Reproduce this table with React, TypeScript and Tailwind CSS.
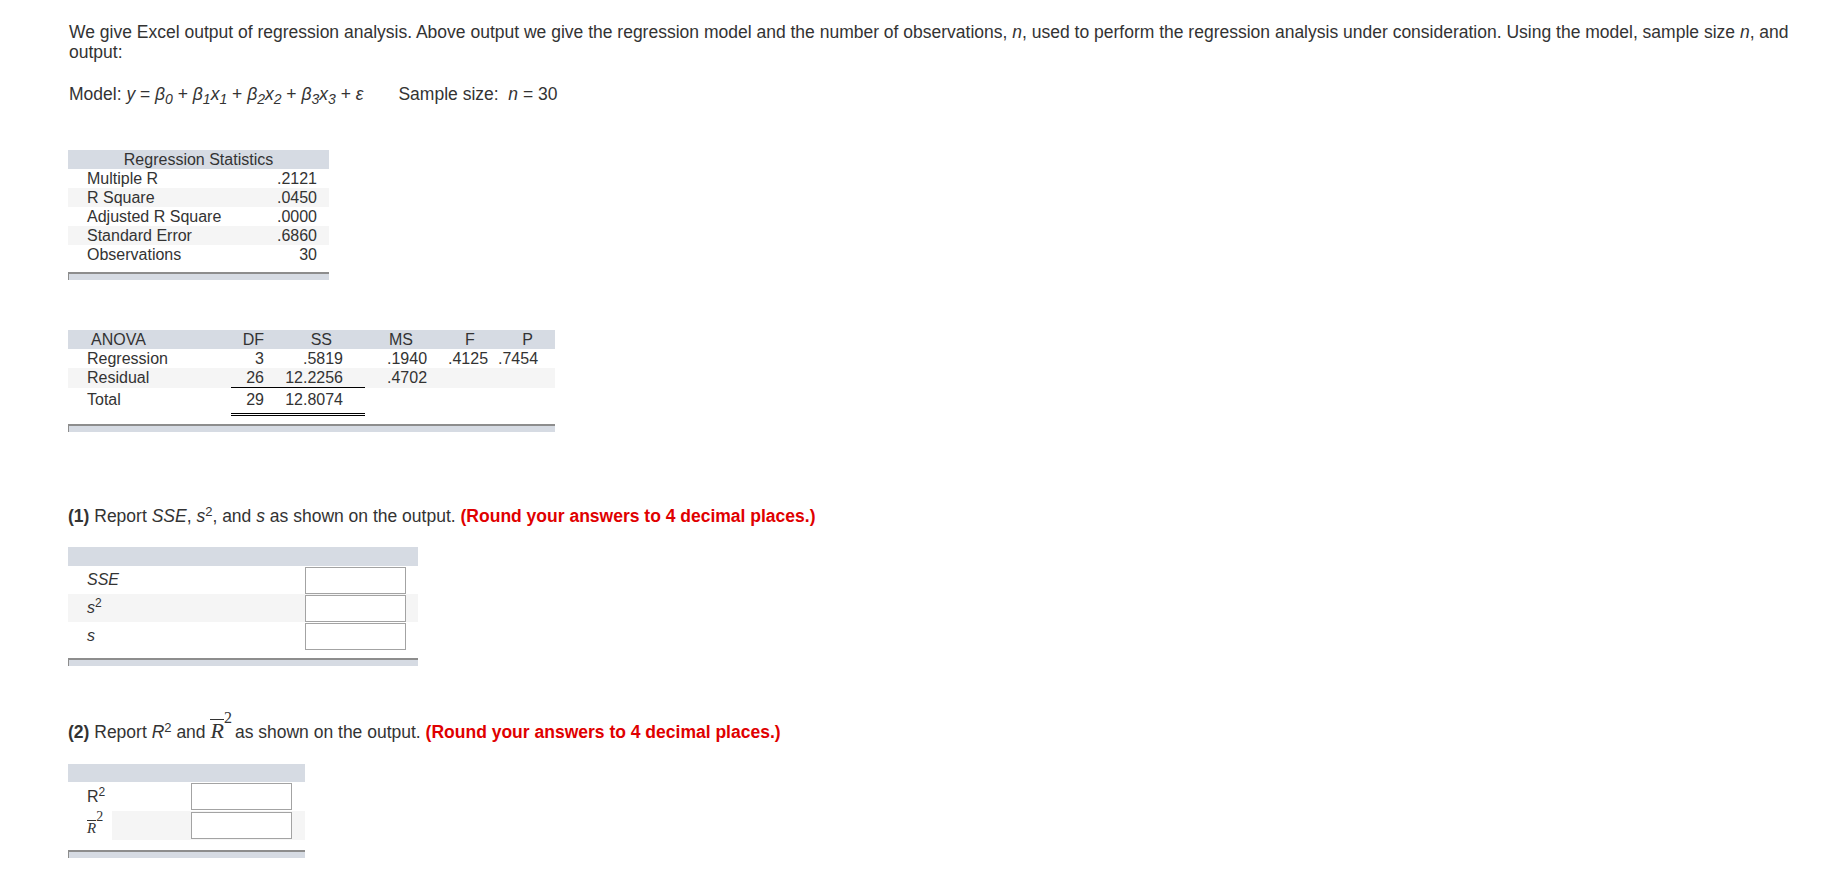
import React from "react";

const font = "font-['Liberation_Sans',Arial,sans-serif]";

function Sub({ children }: { children: React.ReactNode }) {
  return <sub className="relative bottom-[-0.3em] align-baseline text-[14px] italic leading-none">{children}</sub>;
}

function Beta({ n }: { n: string }) {
  return (
    <span className="italic">
      β<Sub>{n}</Sub>
    </span>
  );
}

function X({ n }: { n: string }) {
  return (
    <span className="italic">
      x<Sub>{n}</Sub>
    </span>
  );
}

function BottomBar() {
  return <div className="h-[8px] border-l border-t-2 border-[#8d8d8d] bg-[#d6dbe3]" />;
}

const stats = [
  ["Multiple R", ".2121"],
  ["R Square", ".0450"],
  ["Adjusted R Square", ".0000"],
  ["Standard Error", ".6860"],
  ["Observations", "30"],
];

function RegressionStats() {
  return (
    <div className="w-[261px] text-[16px]">
      <div className="h-[19px] bg-[#d6dbe3] text-center leading-[19px]">Regression Statistics</div>
      {stats.map(([label, value], i) => (
        <div
          key={label}
          className={`flex h-[19px] items-center justify-between pl-[19px] pr-[12px] leading-[19px] ${i % 2 === 1 ? "bg-[#f5f5f5]" : "bg-white"}`}
        >
          <span>{label}</span>
          <span>{value}</span>
        </div>
      ))}
      <div className="mt-[8px]">
        <BottomBar />
      </div>
    </div>
  );
}

function AnovaTable() {
  const cols = "grid grid-cols-[163px_41px_93px_73px_52px_65px]";
  return (
    <div className="w-[487px] text-[16px]">
      <div className={`${cols} h-[19px] bg-[#d6dbe3] leading-[19px]`}>
        <span className="pl-[23px]">ANOVA</span>
        <span className="pr-[8px] text-right">DF</span>
        <span className="pr-[33px] text-right">SS</span>
        <span className="pl-[24px]">MS</span>
        <span className="pl-[27px]">F</span>
        <span className="pr-[22px] text-right">P</span>
      </div>
      <div className={`${cols} h-[19px] bg-white leading-[19px]`}>
        <span className="pl-[19px]">Regression</span>
        <span className="pr-[8px] text-right">3</span>
        <span className="pr-[22px] text-right">.5819</span>
        <span className="pl-[22px]">.1940</span>
        <span className="pl-[10px]">.4125</span>
        <span className="pl-[8px]">.7454</span>
      </div>
      <div className={`${cols} h-[20px] bg-[#f5f5f5] leading-[19px]`}>
        <span className="pl-[19px]">Residual</span>
        <span className="border-b border-black pr-[8px] text-right">26</span>
        <span className="border-b border-black pr-[22px] text-right">12.2256</span>
        <span className="pl-[22px]">.4702</span>
        <span />
        <span />
      </div>
      <div className={`${cols} h-[28px] bg-white leading-[24px]`}>
        <span className="pl-[19px]">Total</span>
        <span className="border-b-[3px] border-double border-black pr-[8px] text-right">29</span>
        <span className="border-b-[3px] border-double border-black pr-[22px] text-right">12.8074</span>
        <span />
        <span />
        <span />
      </div>
      <div className="mt-[8px]">
        <BottomBar />
      </div>
    </div>
  );
}

function AnswerBox() {
  return <div className="h-[27px] w-[101px] border border-[#a3a3a3] bg-white" />;
}

function Red({ children }: { children: React.ReactNode }) {
  return <span className="font-bold text-[#e00000]">{children}</span>;
}

// R with a bar over it and a squared mark, the adjusted R²
function RBar({ small }: { small?: boolean }) {
  return (
    <span className={`font-['Liberation_Serif',serif] italic ${small ? "" : "-mt-[4px]"} inline-block leading-none`}>
      <span className={`inline-block border-t border-[#333] leading-none ${small ? "text-[15px]" : "text-[22px]"}`}>
        R
      </span>
      <sup
        className={`relative align-baseline not-italic leading-none ${small ? "top-[-12px] text-[14px]" : "top-[-15px] text-[16px]"}`}
      >
        2
      </sup>
    </span>
  );
}

export default function App() {
  return (
    <div
      className={`${font} min-h-screen bg-white pl-[69px] pr-[10px] pt-[22px] text-[17.5px] leading-[20px] text-[#333]`}
    >
      <p>
        We give Excel output of regression analysis. Above output we give the regression model and the number of
        observations, <span className="italic">n</span>, used to perform the regression analysis under consideration.
        Using the model, sample size <span className="italic">n</span>, and
        <br />
        output:
      </p>

      <p className="mt-[22px] flex items-baseline">
        <span>
          Model: <span className="italic">y</span> = <Beta n="0" /> + <Beta n="1" />
          <X n="1" /> + <Beta n="2" />
          <X n="2" /> + <Beta n="3" />
          <X n="3" /> + <span className="italic">ε</span>
        </span>
        <span className="ml-[35px]">
          Sample size:&nbsp; <span className="italic">n</span> = 30
        </span>
      </p>

      <div className="-ml-px mt-[46px]">
        <RegressionStats />
      </div>

      <div className="-ml-px mt-[50px]">
        <AnovaTable />
      </div>

      <p className="-ml-px mt-[74px]">
        <span className="font-bold">(1)</span> Report <span className="italic">SSE</span>,{" "}
        <span className="italic">s</span>
        <sup className="text-[13px]">2</sup>, and <span className="italic">s</span> as shown on the output.{" "}
        <Red>(Round your answers to 4 decimal places.)</Red>
      </p>

      <div className="-ml-px mt-[21px] w-[350px] text-[16px]">
        <div className="h-[19px] bg-[#d6dbe3]" />
        {["SSE", "s2", "s"].map((k, i) => (
          <div
            key={k}
            className={`flex h-[28px] items-center justify-between pl-[19px] pr-[12px] ${i === 1 ? "bg-[#f5f5f5]" : "bg-white"}`}
          >
            <span className="italic">
              {k === "s2" ? (
                <>
                  s<sup className="not-italic text-[12px]">2</sup>
                </>
              ) : (
                k
              )}
            </span>
            <AnswerBox />
          </div>
        ))}
        <div className="mt-[8px]">
          <BottomBar />
        </div>
      </div>

      <p className="-ml-px mt-[56px] flex h-[20px] items-baseline">
        <span className="font-bold">(2)</span>&nbsp;Report&nbsp;
        <span className="italic">R</span>
        <sup className="text-[13px]">2</sup>&nbsp;and&nbsp;
        <RBar />
        <span className="ml-[3px]">as shown on the output.&nbsp;</span>
        <Red>(Round your answers to 4 decimal places.)</Red>
      </p>

      <div className="-ml-px mt-[22px] w-[237px] text-[16px]">
        <div className="h-[18px] bg-[#d6dbe3]" />
        <div className="flex h-[29px] items-center justify-between bg-white pl-[19px] pr-[13px]">
          <span>
            R<sup className="text-[12px]">2</sup>
          </span>
          <AnswerBox />
        </div>
        <div className="flex h-[29px] items-center justify-between bg-[#f5f5f5] pr-[13px]">
          <span className="flex h-full w-[44px] items-center bg-white pl-[19px] pt-[4px]">
            <RBar small />
          </span>
          <AnswerBox />
        </div>
        <div className="mt-[10px]">
          <BottomBar />
        </div>
      </div>
    </div>
  );
}
